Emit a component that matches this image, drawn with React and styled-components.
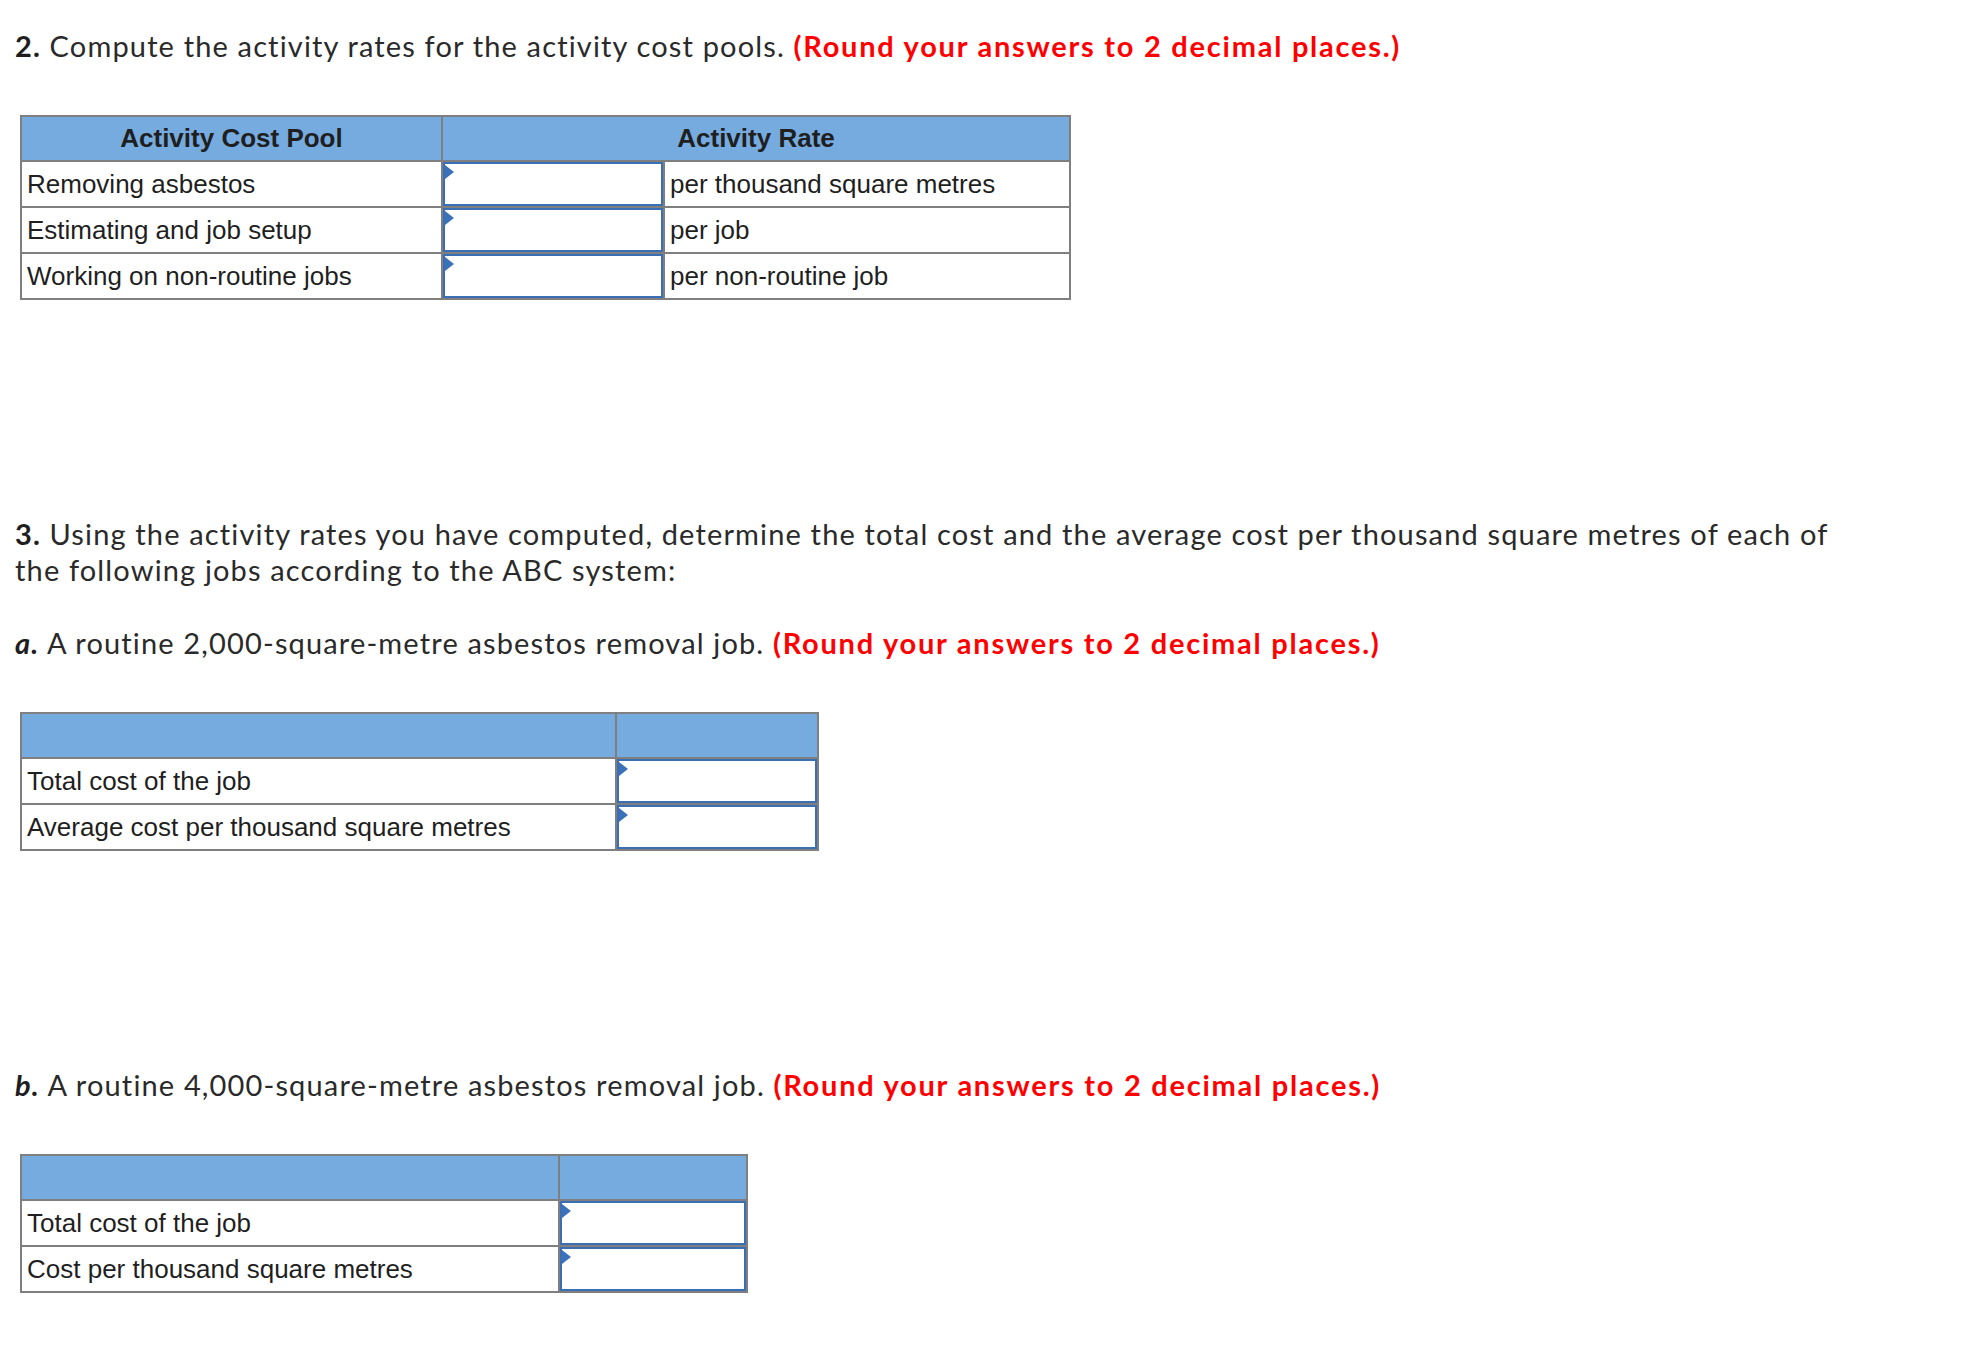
import React from 'react';
import styled, { createGlobalStyle } from 'styled-components';

const GlobalStyle = createGlobalStyle`
  html, body {
    margin: 0;
    padding: 0;
    background: #ffffff;
  }
  body {
    font-family: Lato, "Open Sans", sans-serif;
    color: #2a2a2a;
  }
`;

const Page = styled.div`
  padding: 28px 15px 40px 15px;
  width: 1857px;
`;

const Question = styled.p`
  margin: 0;
  font-size: 29px;
  line-height: 36px;
  letter-spacing: 1.15px;
  color: #2a2a2a;
  margin-top: ${(p) => p.$top || 0}px;
`;

const Num = styled.b`
  font-weight: 700;
  color: #1e1e1e;
  font-style: ${(p) => (p.$italic ? 'italic' : 'normal')};
`;

const Hint = styled.span`
  font-weight: 700;
  color: #ff0000;
  letter-spacing: 1.75px;
`;

const Grid = styled.table`
  margin: 51px 0 0 5px;
  border-collapse: collapse;
  table-layout: fixed;
  width: ${(p) => p.$width}px;
  font-family: "Liberation Sans", Arial, sans-serif;
  font-size: 26px;
  color: #1f1f1f;
`;

const HeadCell = styled.th`
  background: #76abe0;
  border: 2px solid #7f7f7f;
  height: 43px;
  padding: 0 6px;
  font-weight: 700;
  text-align: center;
  vertical-align: middle;
`;

const Cell = styled.td`
  border: 2px solid #7f7f7f;
  height: 44px;
  padding: 0 5px;
  text-align: left;
  vertical-align: middle;
  white-space: nowrap;
`;

const InputCell = styled.td`
  border: 2px solid #7f7f7f;
  height: 44px;
  padding: 0;
`;

const Field = styled.div`
  position: relative;
  height: 44px;
  box-sizing: border-box;
  border: 2px solid #3a6fb5;
  background: #fff;

  &::before {
    content: '';
    position: absolute;
    left: 0;
    top: 1px;
    border-top: 7px solid transparent;
    border-bottom: 7px solid transparent;
    border-left: 9px solid #3a72ba;
  }
`;

const Entry = styled.input`
  width: 100%;
  height: 100%;
  box-sizing: border-box;
  border: none;
  outline: none;
  background: transparent;
  font: inherit;
  padding: 0 6px;
`;

const AnswerBox = ({ label }) => (
  <InputCell>
    <Field>
      <Entry aria-label={label} />
    </Field>
  </InputCell>
);

const rates = [
  { pool: 'Removing asbestos', unit: 'per thousand square metres' },
  { pool: 'Estimating and job setup', unit: 'per job' },
  { pool: 'Working on non-routine jobs', unit: 'per non-routine job' },
];

const CostTable = ({ widths, rows }) => (
  <Grid $width={widths[0] + widths[1]}>
    <colgroup>
      <col style={{ width: widths[0] }} />
      <col style={{ width: widths[1] }} />
    </colgroup>
    <thead>
      <tr>
        <HeadCell />
        <HeadCell />
      </tr>
    </thead>
    <tbody>
      {rows.map((r) => (
        <tr key={r}>
          <Cell>{r}</Cell>
          <AnswerBox label={r} />
        </tr>
      ))}
    </tbody>
  </Grid>
);

export default function App() {
  return (
    <Page>
      <GlobalStyle />
      <Question>
        <Num>2.</Num> Compute the activity rates for the activity cost pools.{' '}
        <Hint>(Round your answers to 2 decimal places.)</Hint>
      </Question>

      <Grid $width={1049}>
        <colgroup>
          <col style={{ width: 421 }} />
          <col style={{ width: 222 }} />
          <col style={{ width: 406 }} />
        </colgroup>
        <thead>
          <tr>
            <HeadCell>Activity Cost Pool</HeadCell>
            <HeadCell colSpan={2}>Activity Rate</HeadCell>
          </tr>
        </thead>
        <tbody>
          {rates.map((r) => (
            <tr key={r.pool}>
              <Cell>{r.pool}</Cell>
              <AnswerBox label={r.pool} />
              <Cell>{r.unit}</Cell>
            </tr>
          ))}
        </tbody>
      </Grid>

      <Question $top={216}>
        <Num>3.</Num> Using the activity rates you have computed, determine the total cost and the
        average cost per thousand square metres of each of the following jobs according to the ABC
        system:
      </Question>

      <Question $top={37}>
        <Num $italic>a.</Num> A routine 2,000-square-metre asbestos removal job.{' '}
        <Hint>(Round your answers to 2 decimal places.)</Hint>
      </Question>

      <CostTable
        widths={[595, 202]}
        rows={['Total cost of the job', 'Average cost per thousand square metres']}
      />

      <Question $top={216}>
        <Num $italic>b.</Num> A routine 4,000-square-metre asbestos removal job.{' '}
        <Hint>(Round your answers to 2 decimal places.)</Hint>
      </Question>

      <CostTable
        widths={[538, 188]}
        rows={['Total cost of the job', 'Cost per thousand square metres']}
      />
    </Page>
  );
}
